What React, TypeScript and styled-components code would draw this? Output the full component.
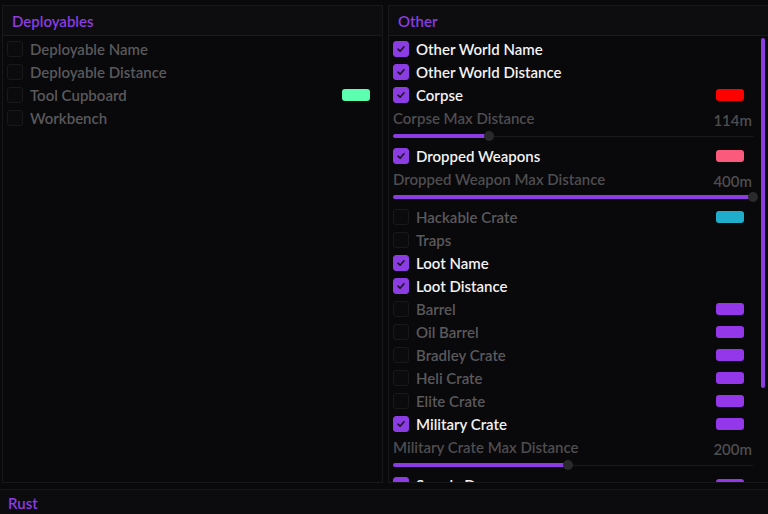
import styled, { createGlobalStyle } from "styled-components";

const GlobalStyle = createGlobalStyle`
  html, body {
    margin: 0;
    padding: 0;
    background: #09080a;
    overflow: hidden;
  }
  body {
    font-family: "Lato", "Noto Sans", sans-serif;
    font-size: 15px;
  }
`;

const purple = "#8b3ce2";

const Screen = styled.div`
  width: 768px;
  height: 514px;
  display: flex;
  flex-direction: column;
  overflow: hidden;
`;

const Columns = styled.div`
  flex: 1;
  min-height: 0;
  display: grid;
  grid-template-columns: 381px 1fr;
  gap: 5px;
  padding: 5px 0 6px 2px;
`;

const Panel = styled.section<{ $open?: boolean }>`
  display: flex;
  flex-direction: column;
  min-height: 0;
  min-width: 0;
  border: 1px solid #18171a;
  border-right-width: ${(p) => (p.$open ? 0 : "1px")};
  background: #09080a;
`;

const PanelHeader = styled.div`
  height: 29px;
  flex: none;
  display: flex;
  align-items: center;
  padding: 0 9px;
  background: #0d0c0e;
  border-bottom: 1px solid #1a191c;
  color: ${purple};
  font-weight: 600;
`;

const ScrollArea = styled.div`
  flex: 1;
  min-height: 0;
  position: relative;
  display: flex;
`;

const List = styled.div<{ $gutter?: boolean }>`
  flex: 1;
  min-width: 0;
  padding: 1px ${(p) => (p.$gutter ? "12px" : "0")} 0 4px;
  overflow: hidden;
`;

const ScrollThumb = styled.div`
  position: absolute;
  top: 2px;
  right: 3px;
  width: 4px;
  height: 350px;
  border-radius: 2px;
  background: ${purple};
`;

const Row = styled.div<{ $on: boolean }>`
  height: 23px;
  display: flex;
  align-items: center;
  gap: 7px;
  padding-right: 8px;
  color: ${(p) => (p.$on ? "#f2f2f2" : "#5a595c")};
  font-weight: 600;
`;

const Box = styled.span<{ $on: boolean }>`
  width: 16px;
  height: 16px;
  flex: none;
  box-sizing: border-box;
  border-radius: 3px;
  display: flex;
  align-items: center;
  justify-content: center;
  background: ${(p) => (p.$on ? purple : "#0b0a0c")};
  border: 1px solid ${(p) => (p.$on ? purple : "#19181b")};
`;

const Label = styled.span`
  flex: 1;
  white-space: nowrap;
`;

const Swatch = styled.span<{ $color: string }>`
  width: 28px;
  height: 12px;
  border-radius: 3px;
  background: ${(p) => p.$color};
  margin-right: 4px;
`;

const SliderHead = styled.div`
  height: 22px;
  box-sizing: border-box;
  padding: 2px 4px 0 0;
  display: flex;
  align-items: center;
  justify-content: space-between;
  color: #4e4d50;
  font-weight: 600;
`;

const SliderValue = styled.span`
  padding-top: 3px;
`;

const SliderTrack = styled.div`
  height: 16px;
  margin-right: 3px;
  position: relative;
  display: flex;
  align-items: center;

  &::before {
    content: "";
    position: absolute;
    left: 0;
    right: 0;
    height: 1px;
    background: #1a191c;
  }
`;

const SliderFill = styled.div`
  height: 4px;
  border-radius: 2px;
  background: ${purple};
  position: relative;
`;

const Thumb = styled.span`
  position: absolute;
  right: -5px;
  top: -3px;
  width: 10px;
  height: 10px;
  border-radius: 50%;
  background: #2a292c;
`;

const StatusBar = styled.footer`
  height: 25px;
  flex: none;
  display: flex;
  align-items: center;
  padding: 2px 8px 0;
  box-sizing: border-box;
  background: #0c0b0d;
  border-top: 1px solid #161518;
  color: ${purple};
  font-weight: 600;
  font-size: 15px;
`;

function Check() {
  return (
    <svg width="10" height="10" viewBox="0 0 10 10">
      <path d="M2 5.2 L4.1 7.2 L8 2.8" fill="none" stroke="#1b1320" strokeWidth="1.6" strokeLinecap="round" strokeLinejoin="round" />
    </svg>
  );
}

type Item =
  | { kind: "check"; label: string; on: boolean; color?: string }
  | { kind: "slider"; label: string; value: number };

function CheckRow({ label, on, color }: { label: string; on: boolean; color?: string }) {
  return (
    <Row $on={on}>
      <Box $on={on}>{on && <Check />}</Box>
      <Label>{label}</Label>
      {color && <Swatch $color={color} />}
    </Row>
  );
}

function Slider({ label, value }: { label: string; value: number }) {
  // range is 10m .. 400m
  const pct = ((value - 10) / 390) * 100;
  return (
    <>
      <SliderHead>
        <span>{label}</span>
        <SliderValue>{value}m</SliderValue>
      </SliderHead>
      <SliderTrack>
        <SliderFill style={{ width: `${pct}%` }}>
          <Thumb />
        </SliderFill>
      </SliderTrack>
    </>
  );
}

const deployables: Item[] = [
  { kind: "check", label: "Deployable Name", on: false },
  { kind: "check", label: "Deployable Distance", on: false },
  { kind: "check", label: "Tool Cupboard", on: false, color: "#5cffb0" },
  { kind: "check", label: "Workbench", on: false },
];

const crate = "#9436ea";

const other: Item[] = [
  { kind: "check", label: "Other World Name", on: true },
  { kind: "check", label: "Other World Distance", on: true },
  { kind: "check", label: "Corpse", on: true, color: "#ff0000" },
  { kind: "slider", label: "Corpse Max Distance", value: 114 },
  { kind: "check", label: "Dropped Weapons", on: true, color: "#fb5a7d" },
  { kind: "slider", label: "Dropped Weapon Max Distance", value: 400 },
  { kind: "check", label: "Hackable Crate", on: false, color: "#1eaecb" },
  { kind: "check", label: "Traps", on: false },
  { kind: "check", label: "Loot Name", on: true },
  { kind: "check", label: "Loot Distance", on: true },
  { kind: "check", label: "Barrel", on: false, color: crate },
  { kind: "check", label: "Oil Barrel", on: false, color: crate },
  { kind: "check", label: "Bradley Crate", on: false, color: crate },
  { kind: "check", label: "Heli Crate", on: false, color: crate },
  { kind: "check", label: "Elite Crate", on: false, color: crate },
  { kind: "check", label: "Military Crate", on: true, color: crate },
  { kind: "slider", label: "Military Crate Max Distance", value: 200 },
  { kind: "check", label: "Supply Drop", on: true, color: crate },
  { kind: "check", label: "Locked Crate", on: false, color: crate },
];

function renderItem(item: Item) {
  return item.kind === "check" ? (
    <CheckRow key={item.label} label={item.label} on={item.on} color={item.color} />
  ) : (
    <Slider key={item.label} label={item.label} value={item.value} />
  );
}

function App() {
  return (
    <Screen>
      <GlobalStyle />
      <Columns>
        <Panel>
          <PanelHeader>Deployables</PanelHeader>
          <ScrollArea>
            <List>{deployables.map(renderItem)}</List>
          </ScrollArea>
        </Panel>
        <Panel $open>
          <PanelHeader>Other</PanelHeader>
          <ScrollArea>
            <List $gutter>{other.map(renderItem)}</List>
            <ScrollThumb />
          </ScrollArea>
        </Panel>
      </Columns>
      <StatusBar>Rust</StatusBar>
    </Screen>
  );
}

export default App;
